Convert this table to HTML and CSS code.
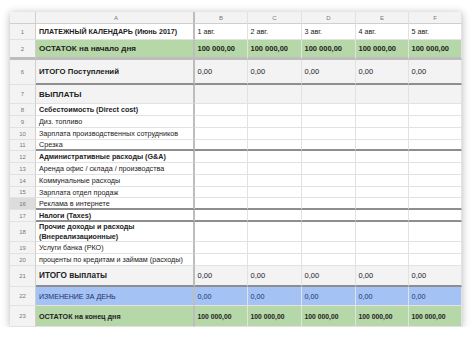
FILE: index.html
```html
<!DOCTYPE html>
<html>
<head>
<meta charset="utf-8">
<link rel="stylesheet" href="styles.css">
</head>
<body>
<div class="sheet">
  <div class="row hdr">
    <div class="rn"></div><div class="c a ctr">A</div><div class="c ctr">B</div><div class="c ctr">C</div><div class="c ctr">D</div><div class="c ctr">E</div><div class="c ctr">F</div>
  </div>
  <div class="row r1">
    <div class="rn">1</div><div class="c a b">ПЛАТЕЖНЫЙ КАЛЕНДАРЬ (Июнь 2017)</div><div class="c">1 авг.</div><div class="c">2 авг.</div><div class="c">3 авг.</div><div class="c">4 авг.</div><div class="c">5 авг.</div>
  </div>
  <div class="row green frozen big">
    <div class="rn">2</div><div class="c a b">ОСТАТОК на начало дня</div><div class="c b">100 000,00</div><div class="c b">100 000,00</div><div class="c b">100 000,00</div><div class="c b">100 000,00</div><div class="c b">100 000,00</div>
  </div>
  <div class="row grey dark big r6">
    <div class="rn">6</div><div class="c a b">ИТОГО Поступлений</div><div class="c">0,00</div><div class="c">0,00</div><div class="c">0,00</div><div class="c">0,00</div><div class="c">0,00</div>
  </div>
  <div class="row grey big7">
    <div class="rn">7</div><div class="c a b">ВЫПЛАТЫ</div><div class="c"></div><div class="c"></div><div class="c"></div><div class="c"></div><div class="c"></div>
  </div>
  <div class="row">
    <div class="rn">8</div><div class="c a b">Себестоимость (Direct cost)</div><div class="c"></div><div class="c"></div><div class="c"></div><div class="c"></div><div class="c"></div>
  </div>
  <div class="row">
    <div class="rn">9</div><div class="c a">Диз. топливо</div><div class="c"></div><div class="c"></div><div class="c"></div><div class="c"></div><div class="c"></div>
  </div>
  <div class="row">
    <div class="rn">10</div><div class="c a">Зарплата производственных сотрудников</div><div class="c"></div><div class="c"></div><div class="c"></div><div class="c"></div><div class="c"></div>
  </div>
  <div class="row dark">
    <div class="rn">11</div><div class="c a">Срезка</div><div class="c"></div><div class="c"></div><div class="c"></div><div class="c"></div><div class="c"></div>
  </div>
  <div class="row">
    <div class="rn">12</div><div class="c a b">Административные расходы (G&amp;A)</div><div class="c"></div><div class="c"></div><div class="c"></div><div class="c"></div><div class="c"></div>
  </div>
  <div class="row">
    <div class="rn">13</div><div class="c a">Аренда офис / склада / производства</div><div class="c"></div><div class="c"></div><div class="c"></div><div class="c"></div><div class="c"></div>
  </div>
  <div class="row">
    <div class="rn">14</div><div class="c a">Коммунальные расходы</div><div class="c"></div><div class="c"></div><div class="c"></div><div class="c"></div><div class="c"></div>
  </div>
  <div class="row">
    <div class="rn">15</div><div class="c a">Зарплата отдел продаж</div><div class="c"></div><div class="c"></div><div class="c"></div><div class="c"></div><div class="c"></div>
  </div>
  <div class="row dark">
    <div class="rn sel">16</div><div class="c a">Реклама в интернете</div><div class="c"></div><div class="c"></div><div class="c"></div><div class="c"></div><div class="c"></div>
  </div>
  <div class="row dark">
    <div class="rn">17</div><div class="c a b">Налоги (Taxes)</div><div class="c"></div><div class="c"></div><div class="c"></div><div class="c"></div><div class="c"></div>
  </div>
  <div class="row">
    <div class="rn">18</div><div class="c a b wrap">Прочие доходы и расходы (Внереализационные)</div><div class="c"></div><div class="c"></div><div class="c"></div><div class="c"></div><div class="c"></div>
  </div>
  <div class="row">
    <div class="rn">19</div><div class="c a">Услуги банка (РКО)</div><div class="c"></div><div class="c"></div><div class="c"></div><div class="c"></div><div class="c"></div>
  </div>
  <div class="row">
    <div class="rn">20</div><div class="c a">проценты по кредитам и займам (расходы)</div><div class="c"></div><div class="c"></div><div class="c"></div><div class="c"></div><div class="c"></div>
  </div>
  <div class="row grey dark big">
    <div class="rn">21</div><div class="c a b">ИТОГО выплаты</div><div class="c">0,00</div><div class="c">0,00</div><div class="c">0,00</div><div class="c">0,00</div><div class="c">0,00</div>
  </div>
  <div class="row blue">
    <div class="rn">22</div><div class="c a">ИЗМЕНЕНИЕ ЗА ДЕНЬ</div><div class="c">0,00</div><div class="c">0,00</div><div class="c">0,00</div><div class="c">0,00</div><div class="c">0,00</div>
  </div>
  <div class="row green small">
    <div class="rn">23</div><div class="c a b">ОСТАТОК на конец дня</div><div class="c b">100 000,00</div><div class="c b">100 000,00</div><div class="c b">100 000,00</div><div class="c b">100 000,00</div><div class="c b">100 000,00</div>
  </div>
</div>
</body>
</html>
```

FILE: styles.css
```css
html, body {
  margin: 0;
  padding: 0;
  background: #ffffff;
}
body {
  padding: 12px 0 0 10px;
  font-family: "Liberation Sans", Arial, sans-serif;
  color: #222222;
}
.sheet {
  width: 452px;
  display: grid;
  grid-template-columns: 26px 159px 53px 54px 54px 53px 53px;
  grid-template-rows: 12px 16px 20px 25px 19px 12px 12px 12px 11px 12px 12px 12px 11px 12px 12px 20px 12px 12px 21px 19px 21px;
  box-shadow: 0 1px 8px rgba(0, 0, 0, 0.28);
  background: #ffffff;
}
.row {
  display: contents;
}
.rn, .c {
  box-sizing: border-box;
  border-right: 1px solid #e2e2e2;
  border-bottom: 1px solid #e2e2e2;
  display: flex;
  align-items: center;
  overflow: hidden;
  white-space: nowrap;
  font-size: 7.2px;
}
.rn {
  justify-content: center;
  background: #f3f3f3;
  color: #777777;
  font-size: 6px;
  border-right-color: #cfcfcf;
}
.rn.sel {
  background: #dcdcdc;
}
.c {
  padding-left: 2.5px;
}
.c.a {
  padding-left: 3px;
  border-right: 2px solid #bdbdbd;
}
.b {
  font-weight: bold;
}
.r1 > .c.a {
  font-size: 7.1px;
}
.ctr {
  justify-content: center;
  padding-left: 0;
}
.hdr > div {
  background: #f3f3f3;
  color: #777777;
  font-size: 6px;
  border-bottom-color: #cfcfcf;
}
.wrap {
  white-space: normal;
  line-height: 10px;
}
.green > .c {
  background: #b6d7a8;
}
.grey > .c {
  background: #f3f3f3;
}
.blue > .c {
  background: #a4c2f4;
  color: #1c2f6b;
}
.blue > .c.a {
  font-size: 7.05px;
}
.frozen > div {
  border-bottom: 3px solid #bdbdbd;
}
.dark > .c {
  border-bottom: 2px solid #8e8e8e;
}
.big > .c {
  font-size: 7.5px;
}
.big > .c.a {
  font-size: 8.2px;
}
.green.big > .c.a {
  font-size: 8.1px;
}
.r6 > .c.a {
  font-size: 7.8px;
}
.big7 > .c.a {
  font-size: 7.9px;
}
.small > .c {
  font-size: 6.8px;
}
.small > .c.a {
  font-size: 7.2px;
}
```
